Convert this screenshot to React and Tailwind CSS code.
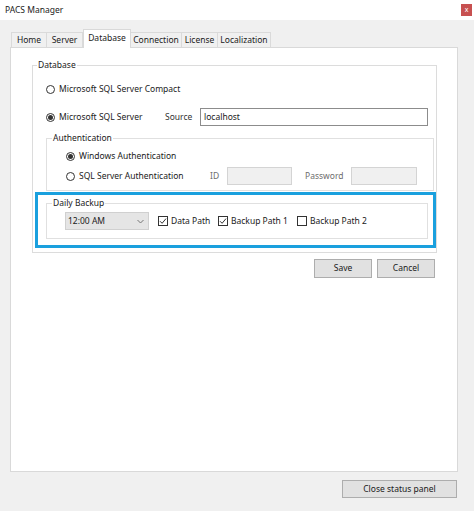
import React from 'react';

const font = { fontFamily: '"Noto Sans", "Open Sans", sans-serif' };

function Radio({ checked, label }) {
  return (
    <div className="flex items-center">
      <span className="w-[9px] h-[9px] rounded-full border border-[#333] bg-white flex items-center justify-center">
        {checked && <span className="w-[5px] h-[5px] rounded-full bg-[#333]" />}
      </span>
      <span className="ml-[4px] text-[#1a1a1a]">{label}</span>
    </div>
  );
}

function Check({ checked, label, width }) {
  return (
    <div className={`flex items-center ${width}`}>
      <span className="w-[10px] h-[10px] border border-[#333] bg-white flex items-center justify-center">
        {checked && (
          <svg width="8" height="8" viewBox="0 0 8 8">
            <path d="M1 4.2 L3.1 6.3 L7 1.6" fill="none" stroke="#333" strokeWidth="1" />
          </svg>
        )}
      </span>
      <span className="ml-[3px] text-[#1a1a1a]">{label}</span>
    </div>
  );
}

const tabs = [
  { name: 'Home', w: 'w-[36px]' },
  { name: 'Server', w: 'w-[37px]' },
  { name: 'Database', w: 'w-[48px]', active: true },
  { name: 'Connection', w: 'w-[52px]' },
  { name: 'License', w: 'w-[37px]' },
  { name: 'Localization', w: 'w-[54px]' },
];

export default function App() {
  return (
    <div className="w-[474px] h-[511px] bg-[#f0f0f0] flex flex-col text-[8.5px] text-[#1a1a1a] overflow-hidden" style={font}>
      {/* Title bar */}
      <div className="h-[20px] bg-white flex items-start justify-between pl-[5px] pr-[2px]">
        <span className="mt-[4px] leading-[11px]">PACS Manager</span>
        <span className="mt-[4px] w-[11px] h-[12px] bg-[#c75050] text-white text-[7px] leading-[12px] text-center">x</span>
      </div>

      <div className="flex flex-col pl-[10px]">
        {/* Tabs */}
        <div className="flex items-end h-[27px] pl-[1px]">
          {tabs.map((t) =>
            t.active ? (
              <div
                key={t.name}
                className={`${t.w} h-[19px] bg-white border border-b-0 border-[#d9d9d9] flex items-center justify-center relative z-10 -mb-[1px] pb-[1px]`}
              >
                {t.name}
              </div>
            ) : (
              <div
                key={t.name}
                className={`${t.w} h-[15px] bg-[#f0f0f0] border border-b-0 border-[#dadada] -ml-[1px] first:ml-0 flex items-center justify-center`}
              >
                {t.name}
              </div>
            )
          )}
        </div>

        {/* Panel */}
        <div className="w-[448px] h-[425px] bg-white border border-[#d9d9d9] pt-[11px] pl-[21px]">
          <fieldset className="w-[404px] border border-[#dcdcdc] p-0 m-0">
            <legend className="ml-[4px] px-px leading-[12px]">Database</legend>

            <div className="h-[18px] mt-[9px] pl-[13px] flex items-center">
              <Radio label="Microsoft SQL Server Compact" />
            </div>

            <div className="h-[18px] mt-[10px] pl-[13px] flex items-center">
              <div className="w-[119px]">
                <Radio checked label="Microsoft SQL Server" />
              </div>
              <span className="w-[35px] text-[#333]">Source</span>
              <div className="w-[228px] h-[18px] border border-[#8c8c8c] bg-white flex items-center pl-[3px]">
                localhost
              </div>
            </div>

            {/* Authentication */}
            <fieldset className="ml-[13px] mt-[6px] w-[388px] border border-[#e0e0e0] p-0 pb-[5px]">
              <legend className="ml-[5px] px-px leading-[12px]">Authentication</legend>
              <div className="h-[18px] mt-[3px] pl-[19px] flex items-center">
                <Radio checked label="Windows Authentication" />
              </div>
              <div className="h-[18px] mt-[2px] pl-[19px] flex items-center">
                <div className="w-[144px]">
                  <Radio label="SQL Server Authentication" />
                </div>
                <span className="w-[17px] text-[#6d6d6d]">ID</span>
                <div className="w-[65px] h-[18px] border border-[#d4d4d4] bg-[#f0f0f0]" />
                <span className="ml-[13px] w-[46px] text-[#6d6d6d]">Password</span>
                <div className="w-[66px] h-[18px] border border-[#d4d4d4] bg-[#f0f0f0]" />
              </div>
            </fieldset>

            {/* Highlighted daily backup */}
            <div className="ml-[2px] mt-[1px] mb-[4px] w-[401px] border-[3px] border-[#1aa0de] pt-[2px] pb-[6px] pl-[8px]">
              <fieldset className="w-[382px] border border-[#e0e0e0] p-0 pb-[8px]">
                <legend className="ml-[5px] px-px leading-[12px]">Daily Backup</legend>
                <div className="h-[18px] mt-[3px] pl-[18px] flex items-center">
                  <div className="w-[84px] h-[18px] bg-[#e5e5e5] border border-[#d0d0d0] flex items-center justify-between pl-[2px] pr-[4px]">
                    <span>12:00 AM</span>
                    <svg width="7" height="5" viewBox="0 0 7 5">
                      <path d="M0.5 1 L3.5 4 L6.5 1" fill="none" stroke="#777" strokeWidth="1" />
                    </svg>
                  </div>
                  <div className="ml-[9px] flex items-center">
                    <Check checked label="Data Path" width="w-[60px]" />
                    <Check checked label="Backup Path 1" width="w-[79px]" />
                    <Check label="Backup Path 2" width="w-[80px]" />
                  </div>
                </div>
              </fieldset>
            </div>
          </fieldset>

          <div className="w-[404px] pr-[1px] mt-[6px] flex justify-end gap-[5px]">
            <button className="w-[58px] h-[19px] bg-[#e1e1e1] border border-[#adadad]">Save</button>
            <button className="w-[58px] h-[19px] bg-[#e1e1e1] border border-[#adadad]">Cancel</button>
          </div>
        </div>

        {/* Bottom bar */}
        <div className="w-[448px] mt-[8px] flex justify-end pr-[1px]">
          <button className="w-[115px] h-[18px] bg-[#e1e1e1] border border-[#adadad]">Close status panel</button>
        </div>
      </div>
    </div>
  );
}
